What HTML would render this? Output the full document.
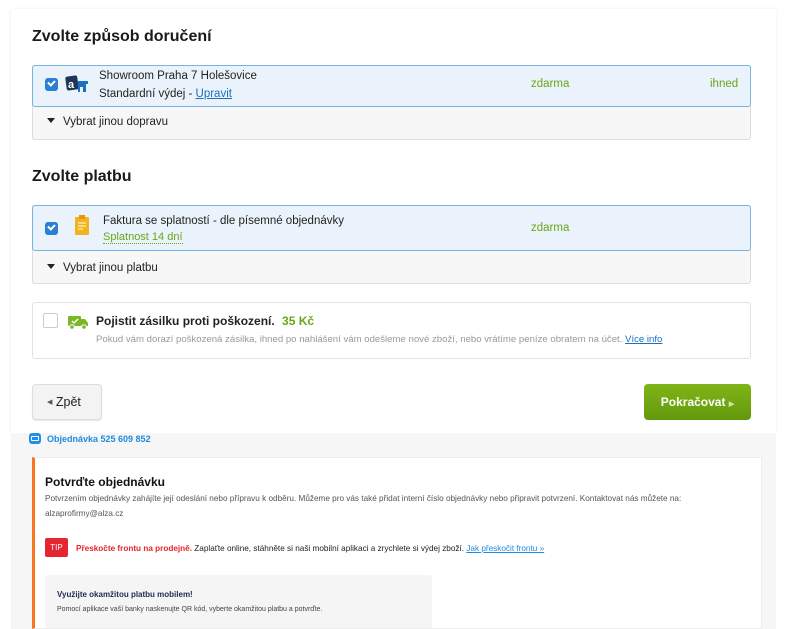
<!DOCTYPE html>
<html><head><meta charset="utf-8"><style>
*{box-sizing:border-box;margin:0;padding:0}
body{width:788px;height:629px;overflow:hidden;background:#fff;font-family:"Liberation Sans",Arial,sans-serif;color:#222;position:relative}
.card{position:absolute;left:11px;top:9px;width:765px;height:424px;background:#fff;box-shadow:0 0 3px rgba(0,0,0,.08)}
h2{position:absolute;font-size:16px;font-weight:bold;color:#1a1a1a}
.box{position:absolute;left:32px;width:719px;border:1px solid #ddd;border-radius:3px;background:#f7f7f7}
.sel{position:absolute;left:0;right:0;top:0;background:#eaf3fb;border:1px solid #7ab3e0;border-radius:3px;margin:-1px}
.cb{position:absolute;width:13px;height:13px;border-radius:3px;background:#2b7fd0}
.cb:after{content:"";position:absolute;left:3px;top:2px;width:5px;height:3px;border-left:2px solid #fff;border-bottom:2px solid #fff;transform:rotate(-45deg)}
.t{position:absolute;font-size:11.5px;white-space:nowrap}
.green{color:#6aa517}
.more{position:absolute;left:14px;font-size:11.5px;color:#222}
.more:before{content:"";display:inline-block;border:4px solid transparent;border-top:5px solid #222;border-bottom:0;margin-right:8px;vertical-align:2px}
a{color:#1a6fbf;text-decoration:underline}
.btn{position:absolute;border-radius:4px}
.gray{position:absolute;left:11px;top:433px;width:765px;height:196px;background:#f6f6f6}
.inner{position:absolute;left:32px;top:457px;width:730px;height:172px;background:#fff;border:1px solid #eee;border-left:3px solid #f7761f;overflow:hidden}
</style></head><body>
<div class="card"></div>
<h2 style="left:32px;top:28px">Zvolte způsob doručení</h2>
<div class="box" style="top:65px;height:75px">
 <div class="sel" style="height:42px"></div>
 <div class="cb" style="left:12px;top:12px"></div>
 <svg style="position:absolute;left:32px;top:8px" width="24" height="20" viewBox="0 0 24 20"><rect x="1" y="2" width="12" height="14" rx="2" fill="#1d3557" transform="rotate(-8 7 9)"/><text x="3" y="14" font-size="11" font-weight="bold" fill="#fff" font-family="Liberation Sans">a</text><path d="M13 7h10v3h-2v8h-3v-5h-3v5h-2z" fill="#1d6fc4"/></svg>
 <div class="t" style="left:66px;top:4px">Showroom Praha 7 Holešovice</div>
 <div class="t" style="left:66px;top:22px">Standardní výdej - <a>Upravit</a></div>
 <div class="t green" style="left:498px;top:12px">zdarma</div>
 <div class="t green" style="left:677px;top:12px">ihned</div>
 <div class="more" style="top:50px">Vybrat jinou dopravu</div>
</div>
<h2 style="left:32px;top:168px">Zvolte platbu</h2>
<div class="box" style="top:205px;height:79px">
 <div class="sel" style="height:46px"></div>
 <div class="cb" style="left:12px;top:16px"></div>
 <svg style="position:absolute;left:42px;top:9px" width="14" height="20" viewBox="0 0 14 20"><rect x="0" y="2" width="14" height="18" rx="1" fill="#f4b21b"/><rect x="4" y="0" width="6" height="4" fill="#e09a10"/><path d="M3 8h8M3 11h8M3 14h5" stroke="#fff" stroke-width="1"/></svg>
 <div class="t" style="left:70px;top:9px">Faktura se splatností - dle písemné objednávky</div>
 <div class="t green" style="left:70px;top:25px;font-size:11px;border-bottom:1px dotted #6aa517">Splatnost 14 dní</div>
 <div class="t green" style="left:498px;top:16px">zdarma</div>
 <div class="more" style="top:56px">Vybrat jinou platbu</div>
</div>
<div class="box" style="top:302px;height:57px;background:#fff;border-color:#e2e2e2">
 <div style="position:absolute;left:10px;top:10px;width:15px;height:15px;border:1px solid #ccc;border-radius:2px"></div>
 <svg style="position:absolute;left:35px;top:13px" width="21" height="14" viewBox="0 0 21 14"><rect x="0" y="0" width="13" height="10" rx="1" fill="#7ab828"/><path d="M13 3h4l3 4v3h-7z" fill="#7ab828"/><circle cx="4" cy="11" r="2.3" fill="#7ab828" stroke="#fff"/><circle cx="16" cy="11" r="2.3" fill="#7ab828" stroke="#fff"/><path d="M4 5l2 2 4-4" stroke="#fff" stroke-width="1.5" fill="none"/></svg>
 <div class="t" style="left:63px;top:11px;font-weight:bold;font-size:12px">Pojistit zásilku proti poškození. <span class="green" style="margin-left:4px">35 Kč</span></div>
 <div class="t" style="left:63px;top:31px;font-size:9.6px;color:#999">Pokud vám dorazí poškozená zásilka, ihned po nahlášení vám odešleme nové zboží, nebo vrátíme peníze obratem na účet. <a>Více info</a></div>
</div>
<div class="btn" style="left:32px;top:384px;width:70px;height:36px;background:#f3f3f3;border:1px solid #ddd;box-shadow:0 1px 1px rgba(0,0,0,.1)"><span style="position:absolute;left:14px;top:10px;font-size:12.5px"><span style="font-size:7px;vertical-align:2px;color:#555">◀</span> Zpět</span></div>
<div class="btn" style="left:644px;top:384px;width:107px;height:36px;background:linear-gradient(#7fb518,#64980d);color:#fff;font-weight:bold;font-size:12px;text-align:center;line-height:36px">Pokračovat <span style="font-size:7px;color:#cfe6a8">▶</span></div>
<div class="gray"></div>
<div style="position:absolute;left:29px;top:433px;width:12px;height:11px;border-radius:3px;background:#1e90e6"><div style="margin:3px 2px;height:5px;border:1px solid #fff;border-radius:1px"></div></div>
<div class="t" style="left:47px;top:434px;font-size:9px;font-weight:bold;color:#1e8be0">Objednávka 525 609 852</div>
<div class="inner">
 <div class="t" style="left:10px;top:17px;font-size:12px;font-weight:bold;color:#111">Potvrďte objednávku</div>
 <div class="t" style="left:10px;top:36px;font-size:8.2px;color:#555">Potvrzením objednávky zahájíte její odeslání nebo přípravu k odběru. Můžeme pro vás také přidat interní číslo objednávky nebo připravit potvrzení. Kontaktovat nás můžete na:</div>
 <div class="t" style="left:10px;top:51px;font-size:8.2px;color:#555">alzaprofirmy@alza.cz</div>
 <div style="position:absolute;left:10px;top:80px;width:23px;height:19px;background:#e52530;border-radius:2px;color:#fff;font-size:8px;text-align:center;line-height:19px">TIP</div>
 <div class="t" style="left:41px;top:86px;font-size:8.2px"><b style="color:#e52530">Přeskočte frontu na prodejně.</b> Zaplaťte online, stáhněte si naši mobilní aplikaci a zrychlete si výdej zboží. <a style="color:#1e8be0">Jak přeskočit frontu »</a></div>
 <div style="position:absolute;left:10px;top:117px;width:387px;height:70px;background:#f5f5f5;border-radius:3px">
  <div class="t" style="left:12px;top:15px;font-size:8px;font-weight:bold;color:#1d2b4f">Využijte okamžitou platbu mobilem!</div>
  <div class="t" style="left:12px;top:31px;font-size:7px;color:#444">Pomocí aplikace vaší banky naskenujte QR kód, vyberte okamžitou platbu a potvrďte.</div>
 </div>
</div>
</body></html>
